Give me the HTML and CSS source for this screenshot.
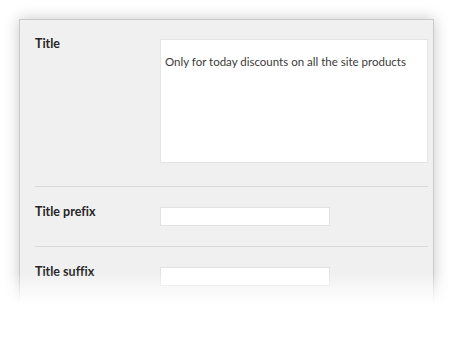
FILE: index.html
```html
<!DOCTYPE html>
<html lang="en">
<head>
  <meta charset="UTF-8">
  <meta name="viewport" content="width=device-width, initial-scale=1.0">
  <title>Title settings</title>
  <link rel="stylesheet" href="styles.css">
</head>
<body>
  <div class="page">
    <!-- settings panel -->
    <div class="panel">
      <div class="row">
        <label class="row-label" for="title">Title</label>
        <textarea id="title" class="field-area" readonly>Only for today discounts on all the site products</textarea>
      </div>
      <div class="row">
        <label class="row-label" for="prefix">Title prefix</label>
        <input id="prefix" class="field-input" type="text">
      </div>
      <div class="row last">
        <label class="row-label" for="suffix">Title suffix</label>
        <input id="suffix" class="field-input" type="text">
      </div>
      <div class="fade"></div>
    </div>
  </div>
</body>
</html>
```

FILE: styles.css
```css
body {
  margin: 0;
  background: #fff;
  font-family: Lato, "Open Sans", sans-serif;
  font-variant-ligatures: none;
  color: #333;
  height: 361px;
  overflow: hidden;
}

.page {
  padding: 19px 0 0 19px;
}

.panel {
  position: relative;
  width: 393px;
  height: 300px;
  padding: 0 5px 0 15px;
  background: #f0f0f0;
  border: 1px solid #c9c9c9;
  box-shadow: 0 0 14px rgba(0, 0, 0, 0.22);
}

.row {
  display: flex;
  align-items: flex-start;
  padding: 19px 0 23px;
  border-bottom: 1px solid #d9d9d9;
}

.row + .row {
  padding: 20px 0 20px;
}

.row.last {
  border-bottom: none;
}

.row-label {
  width: 125px;
  font-size: 12.5px;
  font-weight: bold;
  color: #262626;
  line-height: 14px;
  margin-top: -2px;
}

.field-area {
  width: 268px;
  height: 124px;
  box-sizing: border-box;
  margin: 0;
  padding: 13px 4px 4px;
  border: 1px solid #e4e4e4;
  background: #fff;
  font-family: inherit;
  font-size: 11.5px;
  line-height: 17px;
  color: #3a3a3a;
  resize: none;
  outline: none;
}

.field-input {
  width: 170px;
  height: 19px;
  box-sizing: border-box;
  margin: 0;
  padding: 2px 4px;
  border: 1px solid #e2e2e2;
  background: #fff;
  font-family: inherit;
  font-size: 12px;
}

/* bottom fade-out over the panel */
.fade {
  position: absolute;
  left: -30px;
  right: -30px;
  top: 252px;
  bottom: -30px;
  background: linear-gradient(to bottom, rgba(255, 255, 255, 0) 0, rgba(255, 255, 255, 0.6) 18px, #fff 32px);
}
```
